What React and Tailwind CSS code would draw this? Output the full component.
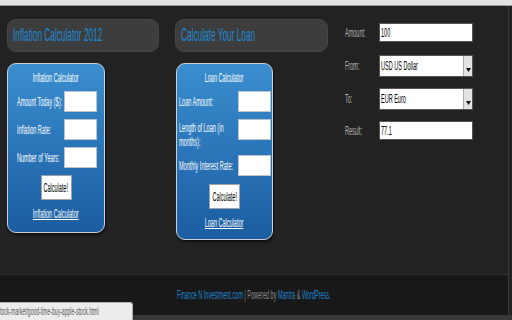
import React from 'react';

// condensed text: the site font is very narrow, squeeze Liberation Sans to match
const Sq = ({ children, className = '' }) => (
  <span className={`inline-block whitespace-nowrap scale-x-[0.46] ${className}`}>{children}</span>
);

const Field = ({ className = '' }) => (
  <div className={`w-[33px] h-[21px] shrink-0 bg-white border border-[#b9c4cf] ${className}`} />
);

const Button = ({ className = '' }) => (
  <div className={`w-[31px] h-[25px] bg-white border border-[#9aa3ad] flex items-center justify-center text-[12px] text-black ${className}`}>
    <Sq>Calculate!</Sq>
  </div>
);

const Header = ({ title }) => (
  <div className="h-[33px] rounded-[9px] bg-[#3d3d3d] border border-[#464646] flex items-center pl-[5px] text-[18px] text-[#2089d3]">
    <Sq className="origin-left scale-x-[0.41]">{title}</Sq>
  </div>
);

const Select = ({ value, className = '' }) => (
  <div className={`w-[94px] h-[22px] bg-white border border-[#555] flex items-stretch ${className}`}>
    <div className="flex-1 flex items-center pl-[1px] text-[12px] text-black overflow-visible">
      <Sq className="origin-left">{value}</Sq>
    </div>
    <div className="w-[9px] bg-[#e2e2e2] border-l border-[#aaa] flex items-end justify-center pb-[4px]">
      <svg width="5" height="4" viewBox="0 0 5 4"><path d="M0 0h5L2.5 4z" fill="#111" /></svg>
    </div>
  </div>
);

export default function App() {
  return (
    <div className="w-[512px] h-[320px] relative overflow-hidden bg-[#222] flex flex-col font-['Liberation_Sans',Arial,sans-serif]">
      <div className="h-[6px] bg-[#e2e2e2] border-b border-[#9a9a9a]" />

      <div className="flex-1 w-[509px] border-r border-[#383838] flex flex-col">
        <div className="flex-1 flex pt-[13px] pl-[7px]">
          {/* Inflation */}
          <div className="w-[152px] shrink-0">
            <Header title="Inflation Calculator 2012" />
            <div className="mt-[11px] w-[98px] h-[170px] rounded-[9px] border border-[#c9d2da] shadow-[1px_2px_2px_#111] bg-gradient-to-b from-[#3a8ecf] to-[#1b5da1] px-[9px] pt-[8px] text-white text-[12px]">
              <div className="flex justify-center leading-[12px]"><Sq className="origin-center">Inflation Calculator</Sq></div>
              <div className="mt-[7px] flex flex-col gap-[7px]">
                <div className="flex items-center">
                  <div className="w-[47px] shrink-0"><Sq className="origin-left">Amount Today ($):</Sq></div>
                  <Field />
                </div>
                <div className="flex items-center">
                  <div className="w-[47px] shrink-0"><Sq className="origin-left">Inflation Rate:</Sq></div>
                  <Field />
                </div>
                <div className="flex items-center">
                  <div className="w-[47px] shrink-0"><Sq className="origin-left">Number of Years:</Sq></div>
                  <Field />
                </div>
              </div>
              <div className="mt-[7px] flex justify-center"><Button /></div>
              <div className="mt-[8px] flex justify-center leading-[12px]"><Sq className="origin-center underline">Inflation Calculator</Sq></div>
            </div>
          </div>

          {/* Loan */}
          <div className="w-[153px] shrink-0 ml-[16px]">
            <Header title="Calculate Your Loan" />
            <div className="mt-[11px] ml-[1px] w-[97px] h-[177px] rounded-[9px] border border-[#c9d2da] shadow-[1px_2px_2px_#111] bg-gradient-to-b from-[#3a8ecf] to-[#1b5da1] pl-[2px] pr-[2px] pt-[8px] text-white text-[12px]">
              <div className="flex justify-center leading-[12px]"><Sq className="origin-center">Loan Calculator</Sq></div>
              <div className="mt-[7px] flex flex-col gap-[7px]">
                <div className="flex items-center">
                  <div className="w-[59px] shrink-0"><Sq className="origin-left">Loan Amount:</Sq></div>
                  <Field />
                </div>
                <div className="flex items-start h-[29px]">
                  <div className="w-[59px] shrink-0 pt-[2px] leading-[14px]">
                    <Sq className="origin-left">Length of Loan (in</Sq><br />
                    <Sq className="origin-left">months):</Sq>
                  </div>
                  <Field />
                </div>
                <div className="flex items-center">
                  <div className="w-[59px] shrink-0"><Sq className="origin-left">Monthly Interest Rate:</Sq></div>
                  <Field />
                </div>
              </div>
              <div className="mt-[8px] flex justify-center"><Button /></div>
              <div className="mt-[8px] flex justify-center leading-[12px]"><Sq className="origin-center underline">Loan Calculator</Sq></div>
            </div>
          </div>

          {/* Currency */}
          <div className="ml-[17px] pt-[4px] text-[12px] text-[#b4b4b4]">
            <div className="flex items-center h-[19px]">
              <div className="w-[34px]"><Sq className="origin-left">Amount:</Sq></div>
              <div className="w-[94px] h-[19px] bg-white border border-[#555] flex items-center pl-[1px] text-black"><Sq className="origin-left">100</Sq></div>
            </div>
            <div className="flex items-center mt-[13px]">
              <div className="w-[34px]"><Sq className="origin-left">From:</Sq></div>
              <Select value="USD US Dollar" />
            </div>
            <div className="flex items-center mt-[11px]">
              <div className="w-[34px]"><Sq className="origin-left">To:</Sq></div>
              <Select value="EUR Euro" />
            </div>
            <div className="flex items-center mt-[11px]">
              <div className="w-[34px]"><Sq className="origin-left">Result:</Sq></div>
              <div className="w-[94px] h-[19px] bg-white border border-[#555] flex items-center pl-[1px] text-black"><Sq className="origin-left">77.1</Sq></div>
            </div>
          </div>
        </div>

        <footer className="h-[41px] bg-[#181818] border-t border-[#2e2e2e] flex items-center justify-center text-[12px] text-[#8a8a8a]">
          <Sq className="origin-center">
            <span className="text-[#1e86d2]">Finance N Investment.com</span> | Powered by{' '}
            <span className="text-[#1e86d2]">Mantra</span> &amp; <span className="text-[#1e86d2]">WordPress.</span>
          </Sq>
        </footer>
      </div>

      <div className="h-[5px] bg-[#383838]" />

      {/* status bar link preview */}
      <div className="absolute left-0 bottom-0 w-[133px] h-[18px] bg-[#ececec] border-t border-r border-[#b0b0b0] rounded-tr-[3px] flex items-center text-[11px] text-[#555] overflow-hidden">
        <Sq className="origin-left scale-x-[0.5]">tock-market/good-time-buy-apple-stock.html</Sq>
      </div>
    </div>
  );
}
